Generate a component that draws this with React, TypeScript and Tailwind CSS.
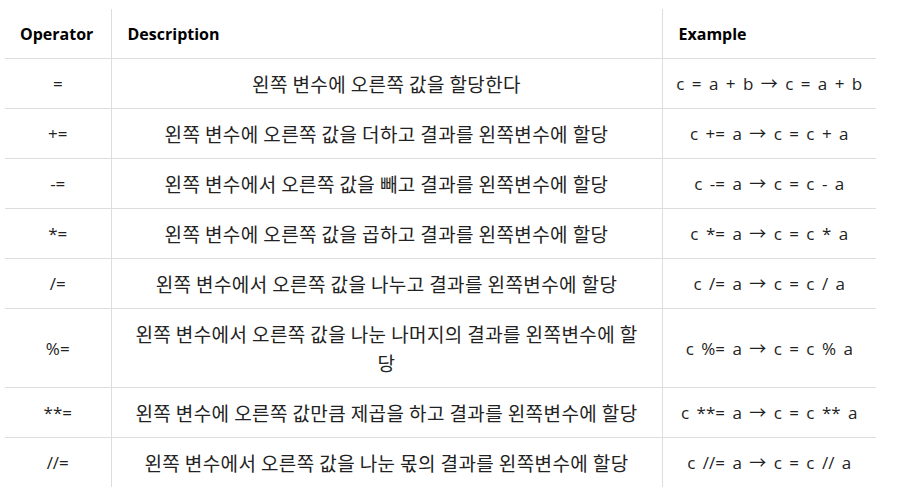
import React from 'react';

const ROWS = [
  { op: '=', desc: '왼쪽 변수에 오른쪽 값을 할당한다', ex: 'c = a + b → c = a + b' },
  { op: '+=', desc: '왼쪽 변수에 오른쪽 값을 더하고 결과를 왼쪽변수에 할당', ex: 'c += a → c = c + a' },
  { op: '-=', desc: '왼쪽 변수에서 오른쪽 값을 빼고 결과를 왼쪽변수에 할당', ex: 'c -= a → c = c - a' },
  { op: '*=', desc: '왼쪽 변수에 오른쪽 값을 곱하고 결과를 왼쪽변수에 할당', ex: 'c *= a → c = c * a' },
  { op: '/=', desc: '왼쪽 변수에서 오른쪽 값을 나누고 결과를 왼쪽변수에 할당', ex: 'c /= a → c = c / a' },
  { op: '%=', desc: '왼쪽 변수에서 오른쪽 값을 나눈 나머지의 결과를 왼쪽변수에 할당', ex: 'c %= a → c = c % a' },
  { op: '**=', desc: '왼쪽 변수에 오른쪽 값만큼 제곱을 하고 결과를 왼쪽변수에 할당', ex: 'c **= a → c = c ** a' },
  { op: '//=', desc: '왼쪽 변수에서 오른쪽 값을 나눈 몫의 결과를 왼쪽변수에 할당', ex: 'c //= a → c = c // a' },
];

export default function App() {
  return (
    <div
      className="min-h-[504px] bg-white pt-[9px] pl-[5px] text-[18px] text-[#222]"
      style={{ fontFamily: '"Open Sans", "Noto Sans CJK KR", sans-serif' }}
    >
      <table className="w-[871px] table-fixed border-collapse">
        <colgroup>
          <col className="w-[106px]" />
          <col className="w-[551px]" />
          <col className="w-[214px]" />
        </colgroup>
        <thead>
          <tr className="border-b border-[#dddddd]">
            <th className="px-[15px] pt-[11px] pb-[9px] text-left text-[16px] font-bold leading-[29px] text-black">Operator</th>
            <th className="border-l border-[#dddddd] px-[16px] pt-[11px] pb-[9px] text-left text-[16px] font-bold leading-[29px] text-black">Description</th>
            <th className="border-l border-[#dddddd] px-[16px] pt-[11px] pb-[9px] text-left text-[16px] font-bold leading-[29px] text-black">Example</th>
          </tr>
        </thead>
        <tbody>
          {ROWS.map((r, i) => (
            <tr key={r.op} className={i < ROWS.length - 1 ? 'border-b border-[#dddddd]' : ''}>
              <td className="px-[15px] py-[10px] text-center text-[17px] leading-[29px]">{r.op}</td>
              <td
                className="border-l border-[#dddddd] px-[20px] py-[10px] text-center text-[19px] leading-[29px] tracking-[0.4px]"
                style={{ fontFamily: '"Noto Sans CJK KR", sans-serif' }}
              >
                {r.desc}
              </td>
              <td className="border-l border-[#dddddd] px-[10px] py-[10px] text-center text-[17px] leading-[29px] whitespace-nowrap [word-spacing:3px]">{r.ex}</td>
            </tr>
          ))}
        </tbody>
      </table>
    </div>
  );
}
